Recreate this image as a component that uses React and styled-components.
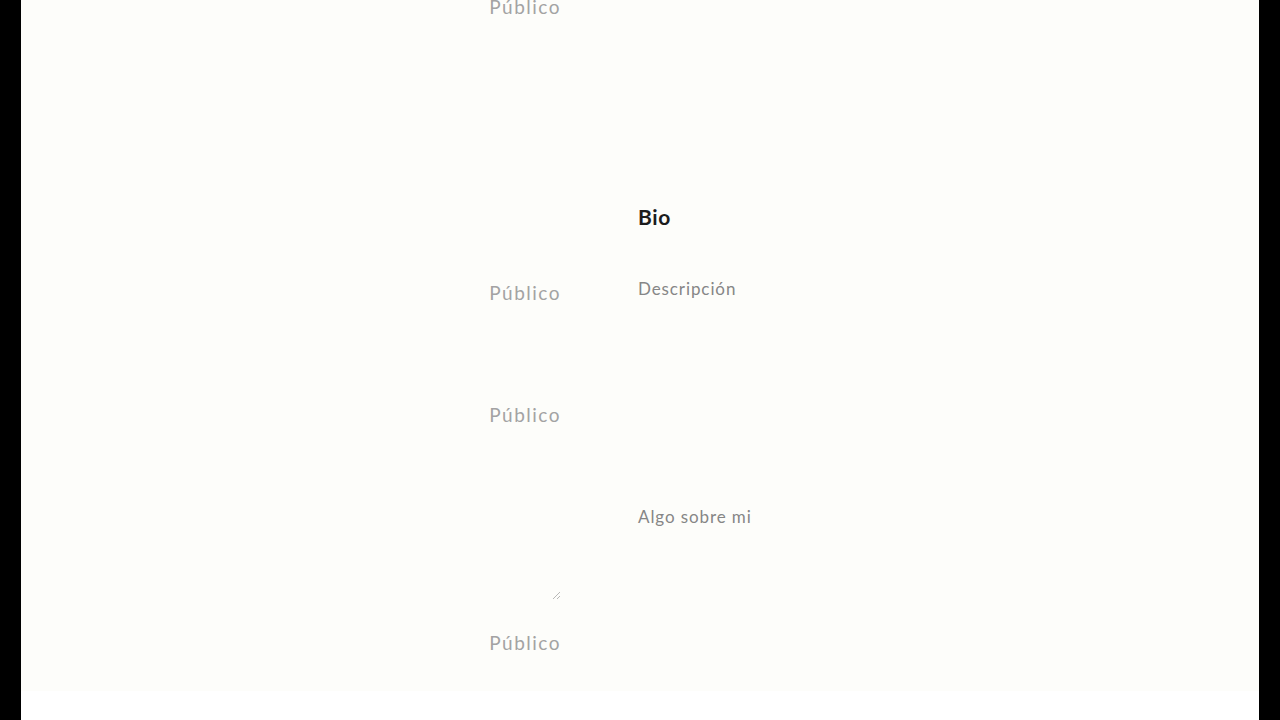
import styled, { createGlobalStyle } from 'styled-components';

const GlobalStyle = createGlobalStyle`
  html, body {
    margin: 0;
    padding: 0;
    background: #000;
  }
  body {
    font-family: Lato, "Noto Sans", sans-serif;
  }
`;

function App() {
  return (
    <Frame>
      <GlobalStyle />
      <Screen>
        <Form>
          <div className='left'>
            <Visibility top={0}>Público</Visibility>
            <Visibility top={262}>Público</Visibility>
            <Visibility top={98}>Público</Visibility>
            <BioInput aria-label='Algo sobre mi' />
            <Visibility top={31}>Público</Visibility>
          </div>

          <div className='right'>
            <SectionTitle>Bio</SectionTitle>
            <FieldLabel top={50}>Descripción</FieldLabel>
            <FieldLabel top={208}>Algo sobre mi</FieldLabel>
          </div>
        </Form>
      </Screen>
      <BottomStrip />
    </Frame>
  );
}

export default App;

const Frame = styled.div`
  width: 1238px;
  height: 720px;
  margin: 0 21px;
  display: flex;
  flex-direction: column;
  overflow: hidden;
`;

const Screen = styled.div`
  height: 691px;
  flex-shrink: 0;
  background: #fdfdfa;
  overflow: hidden;
`;

const BottomStrip = styled.div`
  flex: 1;
  background: #ffffff;
`;

const Form = styled.div`
  margin-top: -5px;
  display: grid;
  grid-template-columns: 540px 1fr;
  column-gap: 77px;

  .left {
    display: flex;
    flex-direction: column;
    align-items: flex-end;
  }
  .right {
    display: flex;
    flex-direction: column;
    align-items: flex-start;
    padding-top: 210px;
  }
`;

const Visibility = styled.span`
  margin-top: ${(p) => p.top}px;
  font-size: 19px;
  line-height: 24px;
  font-weight: 400;
  letter-spacing: 1.5px;
  color: #a3a3a3;
`;

const BioInput = styled.textarea`
  margin-top: 43px;
  width: 540px;
  height: 130px;
  box-sizing: border-box;
  border: none;
  outline: none;
  background: transparent;
  resize: vertical;
  font-family: inherit;
  opacity: 0.45;
`;

const SectionTitle = styled.h3`
  margin: 0;
  font-size: 21px;
  line-height: 24px;
  font-weight: 700;
  letter-spacing: 0.6px;
  color: #1c1c1c;
`;

const FieldLabel = styled.label`
  margin-top: ${(p) => p.top}px;
  font-size: 17px;
  line-height: 20px;
  font-weight: 400;
  letter-spacing: 0.9px;
  color: #868686;
`;
